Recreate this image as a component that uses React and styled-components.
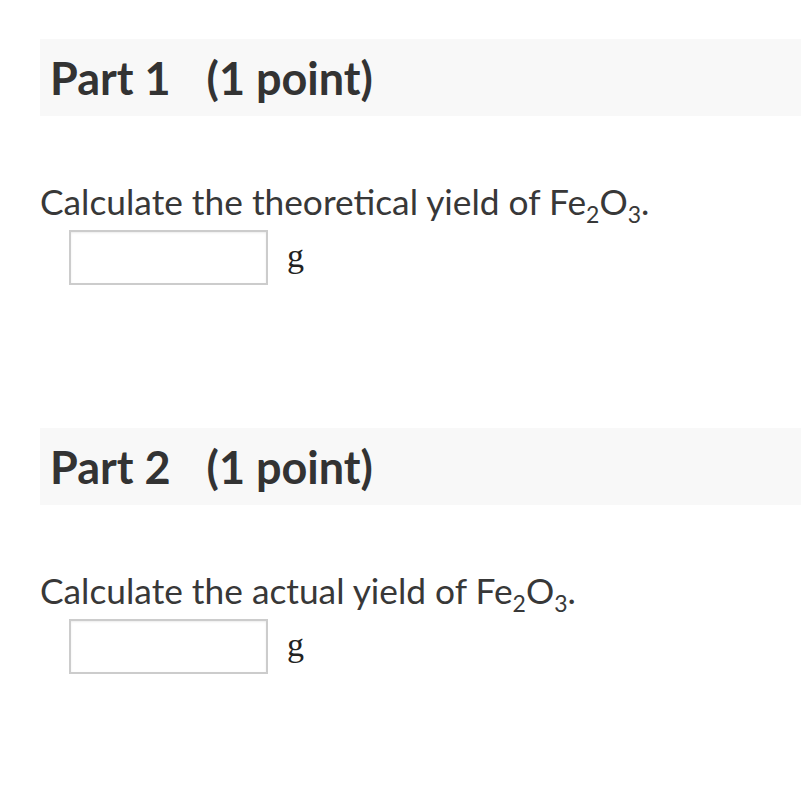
import React from "react";
import styled, { createGlobalStyle } from "styled-components";

const Global = createGlobalStyle`
  html, body { margin: 0; padding: 0; background: #fff; }
  body { font-family: Lato, "Open Sans", sans-serif; color: #333; }
`;

const Page = styled.div`
  padding: 39px 0 0 40px;
  display: flex;
  flex-direction: column;
`;

const Part = styled.section`
  display: flex;
  flex-direction: column;
  margin-bottom: ${(p) => p.$gap || 0}px;
`;

const Header = styled.div`
  height: 77px;
  background: #f8f8f8;
  display: flex;
  align-items: center;
  padding-left: 10px;
  font-size: 45px;
  font-weight: 700;
  color: #333;
  gap: 36px;
`;

const Question = styled.div`
  margin-top: 66px;
  font-size: 35.3px;
  line-height: 40px;
  color: #383838;
  sub {
    font-size: 23px;
    vertical-align: -8px;
    line-height: 0;
  }
`;

const AnswerRow = styled.div`
  display: flex;
  align-items: center;
  margin-top: 8px;
  padding-left: 29px;
  gap: 19px;
`;

const Input = styled.input`
  box-sizing: border-box;
  width: 199px;
  height: 55px;
  border: 2px solid #ccc;
  box-shadow: inset 0 1px 2px rgba(0, 0, 0, 0.08);
  background: #fff;
  outline: none;
  padding: 0 8px;
  font-size: 24px;
`;

const Unit = styled.span`
  font-family: "Liberation Serif", "Times New Roman", serif;
  font-size: 34px;
  color: #222;
  position: relative;
  top: -2px;
`;

function Formula() {
  return (
    <>
      Fe<sub>2</sub>O<sub>3</sub>.
    </>
  );
}

export default function App() {
  return (
    <>
      <Global />
      <Page>
        <Part $gap={143}>
          <Header>
            <span>Part 1</span>
            <span>(1 point)</span>
          </Header>
          <Question>
            Calculate the theoretical yield of <Formula />
          </Question>
          <AnswerRow>
            <Input type="text" />
            <Unit>g</Unit>
          </AnswerRow>
        </Part>
        <Part>
          <Header>
            <span>Part 2</span>
            <span>(1 point)</span>
          </Header>
          <Question>
            Calculate the actual yield of <Formula />
          </Question>
          <AnswerRow>
            <Input type="text" />
            <Unit>g</Unit>
          </AnswerRow>
        </Part>
      </Page>
    </>
  );
}
